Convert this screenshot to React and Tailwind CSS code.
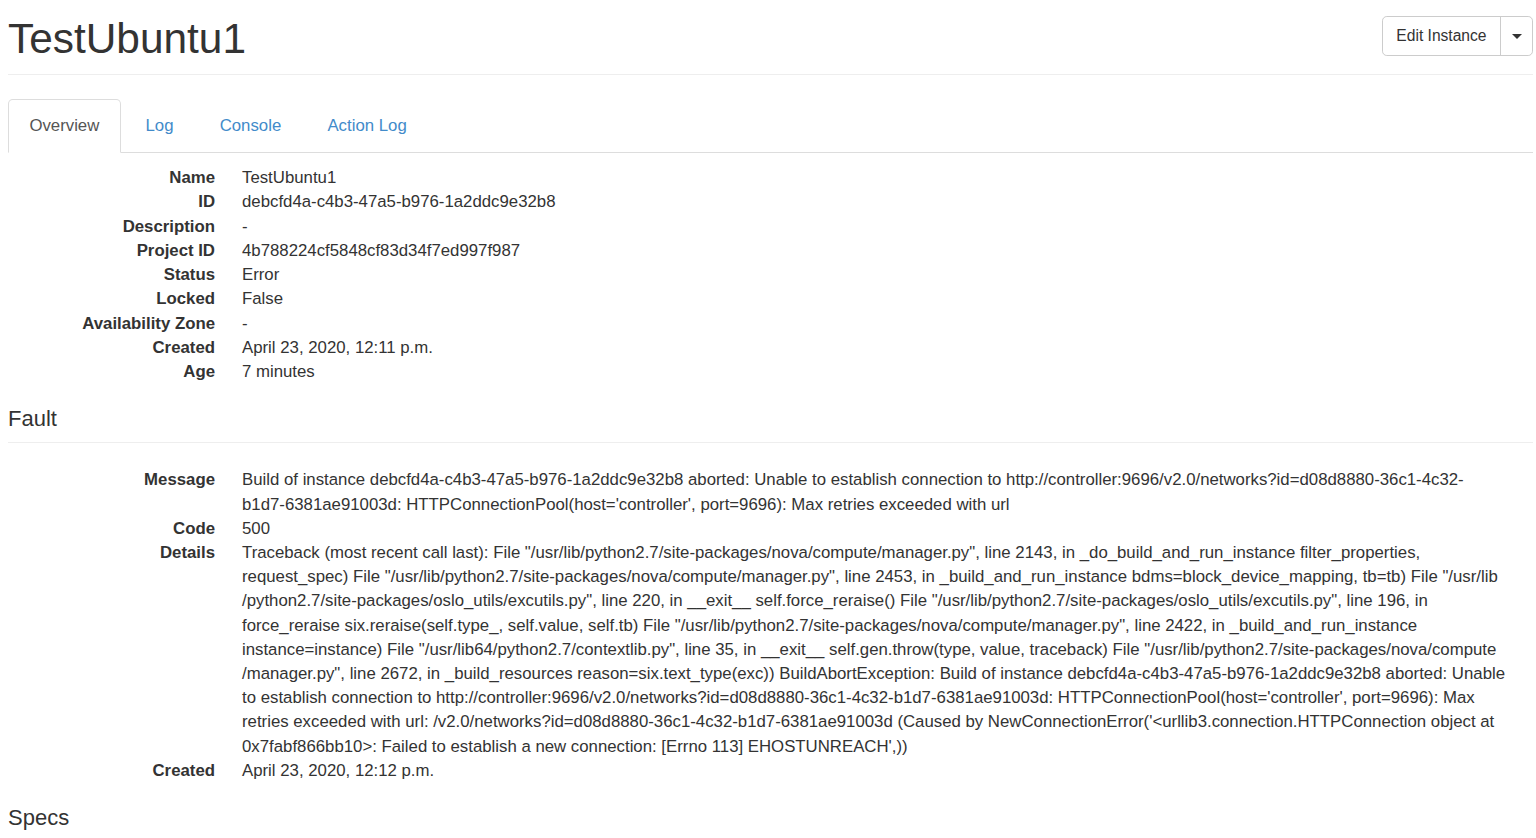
import React from "react";

const overview = [
  ["Name", "TestUbuntu1"],
  ["ID", "debcfd4a-c4b3-47a5-b976-1a2ddc9e32b8"],
  ["Description", "-"],
  ["Project ID", "4b788224cf5848cf83d34f7ed997f987"],
  ["Status", "Error"],
  ["Locked", "False"],
  ["Availability Zone", "-"],
  ["Created", "April 23, 2020, 12:11 p.m."],
  ["Age", "7 minutes"],
];

// lines kept as in the reference so the wrapping is the same
const messageLines = [
  "Build of instance debcfd4a-c4b3-47a5-b976-1a2ddc9e32b8 aborted: Unable to establish connection to http://controller:9696/v2.0/networks?id=d08d8880-36c1-4c32-",
  "b1d7-6381ae91003d: HTTPConnectionPool(host='controller', port=9696): Max retries exceeded with url",
];

const detailLines = [
  'Traceback (most recent call last): File "/usr/lib/python2.7/site-packages/nova/compute/manager.py", line 2143, in _do_build_and_run_instance filter_properties,',
  'request_spec) File "/usr/lib/python2.7/site-packages/nova/compute/manager.py", line 2453, in _build_and_run_instance bdms=block_device_mapping, tb=tb) File "/usr/lib',
  '/python2.7/site-packages/oslo_utils/excutils.py", line 220, in __exit__ self.force_reraise() File "/usr/lib/python2.7/site-packages/oslo_utils/excutils.py", line 196, in',
  'force_reraise six.reraise(self.type_, self.value, self.tb) File "/usr/lib/python2.7/site-packages/nova/compute/manager.py", line 2422, in _build_and_run_instance',
  'instance=instance) File "/usr/lib64/python2.7/contextlib.py", line 35, in __exit__ self.gen.throw(type, value, traceback) File "/usr/lib/python2.7/site-packages/nova/compute',
  '/manager.py", line 2672, in _build_resources reason=six.text_type(exc)) BuildAbortException: Build of instance debcfd4a-c4b3-47a5-b976-1a2ddc9e32b8 aborted: Unable',
  "to establish connection to http://controller:9696/v2.0/networks?id=d08d8880-36c1-4c32-b1d7-6381ae91003d: HTTPConnectionPool(host='controller', port=9696): Max",
  "retries exceeded with url: /v2.0/networks?id=d08d8880-36c1-4c32-b1d7-6381ae91003d (Caused by NewConnectionError('<urllib3.connection.HTTPConnection object at",
  "0x7fabf866bb10>: Failed to establish a new connection: [Errno 113] EHOSTUNREACH',))",
];

const tabs = ["Overview", "Log", "Console", "Action Log"];

function Row({ label, children }) {
  return (
    <>
      <dt className="font-bold text-right">{label}</dt>
      <dd>{children}</dd>
    </>
  );
}

function Lines({ lines }) {
  return lines.map((l, i) => (
    <div key={i} className="whitespace-nowrap">
      {l}
    </div>
  ));
}

export default function App() {
  return (
    <div className="pl-2 pr-[3px] bg-white text-[#333] text-[16.8px] leading-[24.2px] font-['Liberation_Sans',Arial,sans-serif] min-h-screen">
      {/* page header */}
      <div className="flex items-start justify-between pt-4 pb-[12px] border-b border-[#eee]">
        <h1 className="text-[42.4px] leading-[46px] font-normal">TestUbuntu1</h1>
        <div className="flex border border-[#ccc] rounded-[4.8px] text-[15.6px] leading-[24px]">
          <button className="px-[13.5px] py-[7px] border-r border-[#ccc]">Edit Instance</button>
          <button className="w-[31px] flex items-center justify-center">
            <span className="w-0 h-0 border-x-[5px] border-t-[5px] border-x-transparent border-t-[#333]" />
          </button>
        </div>
      </div>

      {/* tabs */}
      <ul className="flex mt-6 border-b border-[#ddd]">
        {tabs.map((t, i) => (
          <li key={t} className="-mb-px mr-[3.4px]">
            <a
              href="#"
              className={
                i === 0
                  ? "block px-[20.4px] py-[14px] border border-[#ddd] border-b-white rounded-t-[4.8px] bg-white text-[#555]"
                  : "block px-[20.4px] py-[14px] border border-transparent text-[#428bca]"
              }
            >
              {t}
            </a>
          </li>
        ))}
      </ul>

      {/* overview */}
      <dl className="grid grid-cols-[207px_1fr] gap-x-[27px] mt-[13px] leading-[24.25px]">
        {overview.map(([k, v]) => (
          <Row key={k} label={k}>
            {v}
          </Row>
        ))}
      </dl>

      {/* fault */}
      <h4 className="mt-[23px] text-[22px] leading-[24px] pb-[11px] border-b border-[#eee]">Fault</h4>
      <dl className="grid grid-cols-[207px_1fr] gap-x-[27px] mt-[25px]">
        <Row label="Message">
          <Lines lines={messageLines} />
        </Row>
        <Row label="Code">500</Row>
        <Row label="Details">
          <Lines lines={detailLines} />
        </Row>
        <Row label="Created">April 23, 2020, 12:12 p.m.</Row>
      </dl>

      {/* specs */}
      <h4 className="mt-[23px] text-[22px] leading-[24px] pb-[11px] border-b border-[#eee]">Specs</h4>
    </div>
  );
}
